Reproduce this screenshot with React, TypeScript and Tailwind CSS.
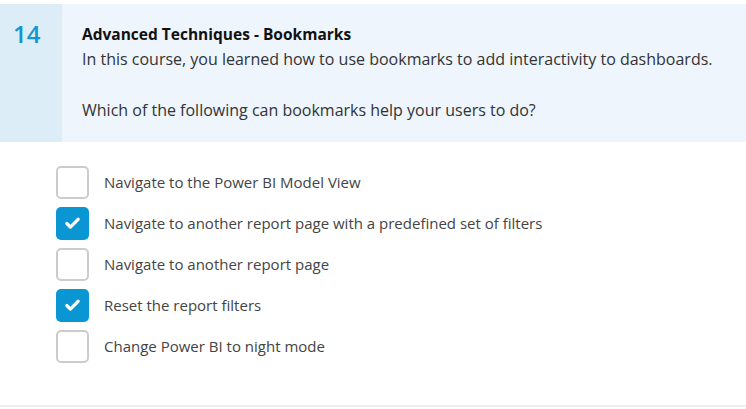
import { Check } from 'lucide-react';

const options = [
  { label: 'Navigate to the Power BI Model View', checked: false },
  { label: 'Navigate to another report page with a predefined set of filters', checked: true },
  { label: 'Navigate to another report page', checked: false },
  { label: 'Reset the report filters', checked: true },
  { label: 'Change Power BI to night mode', checked: false },
];

export default function App() {
  return (
    <div className="w-[746px] h-[409px] bg-white font-['Open_Sans',sans-serif] text-[#333] overflow-hidden">
      <div className="pt-[4px]">
        {/* Question header */}
        <div className="flex h-[138px]">
          <div className="w-[62px] bg-[#dcedf8] pl-[13px] pt-[14px]">
            <span className="text-[24px] font-semibold text-[#1296d3] leading-[32px]">14</span>
          </div>
          <div className="flex-1 bg-[#eef5fc] pl-[20px] pt-[19px]">
            <div className="text-[15.5px] font-bold text-[#111] leading-[23px]">Advanced Techniques - Bookmarks</div>
            <p className="text-[16px] leading-[26px] text-[#333]">
              In this course, you learned how to use bookmarks to add interactivity to dashboards.
            </p>
            <p className="text-[16px] leading-[26px] text-[#333] mt-[25px]">
              Which of the following can bookmarks help your users to do?
            </p>
          </div>
        </div>

        {/* Options */}
        <div className="flex flex-col gap-[8px] pl-[56px] pt-[24px]">
          {options.map((opt) => (
            <div key={opt.label} className="flex items-center gap-[15px]">
              {opt.checked ? (
                <div className="w-[33px] h-[33px] rounded-[5px] bg-[#0a95d3] flex items-center justify-center">
                  <Check className="w-[17px] h-[17px] text-white" strokeWidth={4.5} />
                </div>
              ) : (
                <div className="w-[33px] h-[33px] rounded-[5px] border-2 border-[#cccccc] bg-white" />
              )}
              <span className="text-[15px] text-[#444]">{opt.label}</span>
            </div>
          ))}
        </div>
      </div>
      <div className="mt-[42px] h-[2px] bg-[#ececec]" />
    </div>
  );
}
